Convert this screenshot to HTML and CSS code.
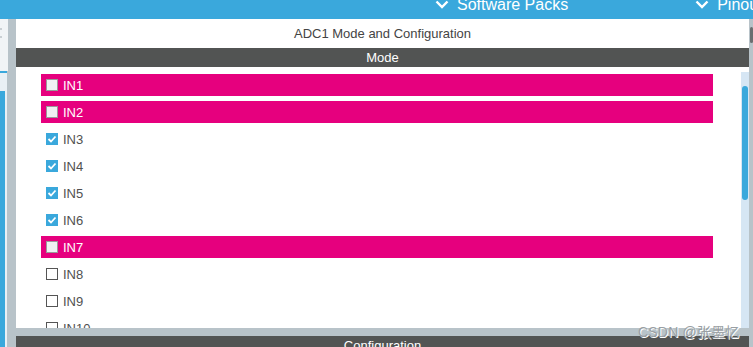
FILE: index.html
```html
<!DOCTYPE html>
<html lang="en">
<head>
    <meta charset="UTF-8">
    <meta name="viewport" content="width=device-width, initial-scale=1.0">
    <title>ADC1 Mode and Configuration</title>
    <link rel="stylesheet" href="styles.css">
</head>
<body>
    <div class="topbar">
        <div class="nav-item">
            <svg class="chev" width="14" height="9" viewBox="0 0 14 9"><polyline points="1.5,1.5 7,7 12.5,1.5" /></svg>
            <span>Software Packs</span>
        </div>
        <div class="nav-item pinout">
            <svg class="chev" width="14" height="9" viewBox="0 0 14 9"><polyline points="1.5,1.5 7,7 12.5,1.5" /></svg>
            <span>Pinout</span>
        </div>
    </div>

    <div class="workspace">
        <div class="side">
            <div class="side-top"><span class="grip"></span></div>
            <div class="side-box"><div class="side-bar"></div></div>
        </div>
        <div class="gutter"></div>

        <div class="panel">
            <div class="panel-title">ADC1 Mode and Configuration</div>
            <div class="section-head">Mode</div>

            <div class="mode-body">
                <div class="channel-list">
                    <div class="channel conflict"><span class="box"></span>IN1</div>
                    <div class="channel conflict"><span class="box"></span>IN2</div>
                    <div class="channel"><span class="box checked"><svg width="12" height="12" viewBox="0 0 12 12"><polyline points="2.5,6 5,8.5 9.5,3.5" /></svg></span>IN3</div>
                    <div class="channel"><span class="box checked"><svg width="12" height="12" viewBox="0 0 12 12"><polyline points="2.5,6 5,8.5 9.5,3.5" /></svg></span>IN4</div>
                    <div class="channel"><span class="box checked"><svg width="12" height="12" viewBox="0 0 12 12"><polyline points="2.5,6 5,8.5 9.5,3.5" /></svg></span>IN5</div>
                    <div class="channel"><span class="box checked"><svg width="12" height="12" viewBox="0 0 12 12"><polyline points="2.5,6 5,8.5 9.5,3.5" /></svg></span>IN6</div>
                    <div class="channel conflict"><span class="box"></span>IN7</div>
                    <div class="channel"><span class="box"></span>IN8</div>
                    <div class="channel"><span class="box"></span>IN9</div>
                    <div class="channel"><span class="box"></span>IN10</div>
                    <div class="channel"><span class="box"></span>IN11</div>
                </div>
                <div class="scrollbar"><div class="thumb"></div></div>
            </div>

            <div class="section-head config">Configuration</div>
        </div>

        <div class="edge"><span class="edge-mark"></span></div>
    </div>

    <div class="watermark">CSDN @张墨忆</div>
</body>
</html>
```

FILE: styles.css
```css
body {
    margin: 0;
    padding: 0;
    font-family: "Liberation Sans", Arial, sans-serif;
    background: #b8c3c9;
    height: 347px;
    overflow: hidden;
    position: relative;
}

.topbar {
    height: 19px;
    background: #3aa8dc;
    display: flex;
    padding-left: 435px;
    gap: 127px;
    overflow: hidden;
    color: white;
}

.nav-item {
    display: flex;
    align-items: center;
    gap: 8px;
    height: 19px;
    font-size: 16px;
    margin-top: -5px;
    white-space: nowrap;
}

.chev polyline {
    fill: none;
    stroke: white;
    stroke-width: 2.4;
}

.workspace {
    display: flex;
    height: 328px;
}

.side {
    width: 8px;
    display: flex;
    flex-direction: column;
}

.side-top {
    height: 52px;
    background: #f1f4f6;
}

.grip {
    display: block;
    width: 2px;
    height: 6px;
    margin-top: 9px;
    border-top: 2px solid #c9cfd3;
    border-bottom: 2px solid #c9cfd3;
}

.side-box {
    flex: 1;
    border-top: 2px solid #3aa8dc;
    background: #e9f0f5;
    width: 7px;
    display: flex;
    flex-direction: column;
}

.side-bar {
    margin-top: 18px;
    flex: 1;
    width: 5px;
    background: #3aa8dc;
}

.gutter {
    width: 8px;
    background: #b8c3c9;
}

.panel {
    width: 733px;
    display: flex;
    flex-direction: column;
}

.panel-title {
    height: 29px;
    line-height: 29px;
    background: white;
    color: #444;
    font-size: 13px;
    text-align: center;
    flex-shrink: 0;
}

.section-head {
    height: 19px;
    line-height: 19px;
    background: #525453;
    color: white;
    font-size: 13px;
    text-align: center;
    flex-shrink: 0;
}

.section-head.config {
    margin-top: 8px;
    line-height: 20px;
}

.mode-body {
    height: 261px;
    background: white;
    display: flex;
    flex-shrink: 0;
}

.channel-list {
    flex: 1;
    padding: 7px 28px 0 25px;
    overflow: hidden;
}

.channel {
    height: 22px;
    margin-bottom: 5px;
    display: flex;
    align-items: center;
    gap: 5px;
    padding-left: 5px;
    font-size: 13px;
    color: #505050;
}

.channel.conflict {
    background: #e6007e;
    color: white;
}

.box {
    width: 12px;
    height: 12px;
    box-sizing: border-box;
    border: 1px solid #555;
    background: white;
    flex-shrink: 0;
}

.conflict .box {
    border: 1px solid #9a9a9a;
    background: #f0f1f3;
}

.box.checked {
    border: none;
    background: #3aa8dc;
}

.box.checked svg {
    display: block;
}

.box.checked polyline {
    fill: none;
    stroke: white;
    stroke-width: 1.8;
}

.scrollbar {
    width: 8px;
    margin-top: 5px;
    background: #d6e6f4;
    padding: 14px 1px 0;
    box-sizing: border-box;
}

.thumb {
    height: 114px;
    background: #3aa8dc;
    border-radius: 3px;
}

.edge {
    width: 4px;
    background: #b8c3c9;
}

.edge-mark {
    display: block;
    width: 3px;
    height: 16px;
    margin-top: 8px;
    margin-left: 1px;
    background: #6a6e70;
    border-radius: 2px;
}

.watermark {
    position: absolute;
    left: 638px;
    top: 321px;
    font-family: "Liberation Sans", "Noto Sans CJK SC", sans-serif;
    font-size: 14px;
    color: #9a9fa3;
    text-shadow: 1px 1px 0 #ffffff;
    letter-spacing: 0.2px;
}
```
